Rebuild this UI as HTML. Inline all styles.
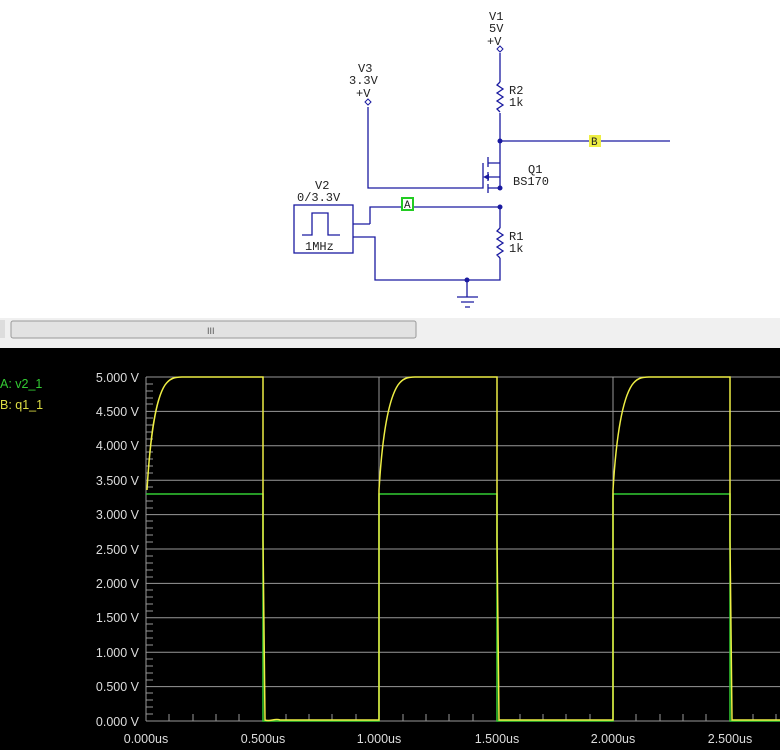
<!DOCTYPE html>
<html><head><style>
html,body{margin:0;padding:0;width:780px;height:750px;overflow:hidden;background:#fff;font-family:"Liberation Sans",sans-serif}
</style></head><body>
<svg width="780" height="750" xmlns="http://www.w3.org/2000/svg" style="position:absolute;left:0;top:0">
<rect x="0" y="0" width="780" height="320" fill="#fff"/>
<g font-family="Liberation Mono, monospace" font-size="12" fill="#222">
<text x="489" y="20">V1</text><text x="489" y="32">5V</text><text x="487" y="45">+V</text>
<text x="358" y="72">V3</text><text x="349" y="84">3.3V</text><text x="356" y="97">+V</text>
<text x="509" y="94">R2</text><text x="509" y="106">1k</text>
<text x="528" y="173">Q1</text><text x="513" y="185">BS170</text>
<text x="315" y="189">V2</text><text x="297" y="201">0/3.3V</text>
<text x="509" y="240">R1</text><text x="509" y="252">1k</text>
<text x="305" y="250">1MHz</text>
</g>
<g stroke="#1a1aa0" stroke-width="1.3" fill="none">
<path d="M500 53V82M500 113V188M500 141H670"/>
<path d="M500 82l-3 3 6 4-6 4 6 4-6 4 6 4-6 4 3 3"/>
<path d="M368 107V188H483V163"/>
<path d="M488 157v10M488 172v9M488 184v9"/>
<path d="M488 163H500M488 188H500M488 177H500"/>
<path d="M370 224V207H500V228M500 258V280H375V237H353M353 224H370"/>
<path d="M500 228l-3 3 6 4-6 4 6 4-6 4 6 4-6 4 3 3"/>
<rect x="294" y="205" width="59" height="48"/>
<path d="M302 235H312V213H328V235H340"/>
<path d="M467 280V297M457 297H478M461 302H474M465 307H470"/>
</g>
<path d="M483 177l6-3v6z" fill="#1a1aa0"/>
<g fill="#1a1aa0"><circle cx="500" cy="141" r="2.5"/><circle cx="500" cy="188" r="2.5"/><circle cx="500" cy="207" r="2.5"/><circle cx="467" cy="280" r="2.5"/></g>
<path d="M500 46l3 3-3 3-3-3z M368 99l3 3-3 3-3-3z" fill="#fff" stroke="#1a1aa0"/>
<rect x="402" y="198" width="11" height="12" fill="#fff" stroke="#2c2" stroke-width="2"/>
<text x="404" y="208" font-family="Liberation Mono,monospace" font-size="11" fill="#222">A</text>
<rect x="589" y="135" width="12" height="12" fill="#ee4"/>
<text x="591" y="145" font-family="Liberation Mono,monospace" font-size="11" fill="#222">B</text>
<rect x="0" y="318" width="780" height="30" fill="#f0f0f0"/>
<rect x="0" y="320" width="5" height="18" fill="#ddd"/>
<rect x="11" y="321" width="405" height="17" rx="2" fill="#e2e2e2" stroke="#999"/>
<text x="207" y="334" font-size="9" fill="#555">III</text>
<rect x="0" y="348" width="780" height="402" fill="#000"/>
<text x="0" y="388" font-size="12.5" fill="#3c3">A: v2_1</text>
<text x="0" y="409" font-size="12.5" fill="#dd4">B: q1_1</text>
<g stroke="#999" stroke-width="1">
<path d="M146 377H780M146 411.4H780M146 445.8H780M146 480.2H780M146 514.6H780M146 549H780M146 583.4H780M146 617.8H780M146 652.2H780M146 686.6H780M146 721H780"/>
<path d="M146 377V721M379 377V721M613 377V721"/>
</g>
<g font-size="12.5" fill="#ddd" text-anchor="end">
<text x="139" y="382">5.000 V</text><text x="139" y="416">4.500 V</text><text x="139" y="450">4.000 V</text><text x="139" y="485">3.500 V</text><text x="139" y="519">3.000 V</text><text x="139" y="554">2.500 V</text><text x="139" y="588">2.000 V</text><text x="139" y="622">1.500 V</text><text x="139" y="657">1.000 V</text><text x="139" y="691">0.500 V</text><text x="139" y="726">0.000 V</text>
</g>
<g font-size="12.5" fill="#ddd" text-anchor="middle">
<text x="146" y="743">0.000us</text><text x="263" y="743">0.500us</text><text x="379" y="743">1.000us</text><text x="497" y="743">1.500us</text><text x="613" y="743">2.000us</text><text x="730" y="743">2.500us</text>
</g>
<g stroke="#999">
<path d="M146 384h7M146 391h7M146 398h7M146 404h7M146 418h7M146 425h7M146 432h7M146 439h7M146 452h7M146 459h7M146 466h7M146 473h7M146 487h7M146 494h7M146 501h7M146 508h7M146 521h7M146 528h7M146 535h7M146 542h7M146 556h7M146 563h7M146 570h7M146 577h7M146 590h7M146 597h7M146 604h7M146 611h7M146 624h7M146 631h7M146 638h7M146 645h7M146 659h7M146 666h7M146 673h7M146 680h7M146 693h7M146 700h7M146 707h7M146 714h7"/>
<path d="M169 721v-7M193 721v-7M216 721v-7M239 721v-7M263 721v-7M286 721v-7M309 721v-7M332 721v-7M356 721v-7M403 721v-7M426 721v-7M449 721v-7M473 721v-7M497 721v-7M520 721v-7M543 721v-7M566 721v-7M590 721v-7M636 721v-7M660 721v-7M683 721v-7M706 721v-7M730 721v-7M753 721v-7M776 721v-7"/>
</g>
<g fill="none" stroke-width="1.5">
<path stroke="#3c3" d="M146 494H263V721H379V494H497V721H613V494H730V721H780"/>
<path stroke="#ee4" d="M147 490C150 440 155 400 165 385C170 378 175 377 182 377H263V540L265 720C270 722 275 718 280 720H379V490C382 440 388 400 398 385C403 378 408 377 415 377H497V540L499 720H613V490C616 440 622 400 632 385C637 378 642 377 649 377H730V540L732 720H780"/>
</g>
</svg>
</body></html>
